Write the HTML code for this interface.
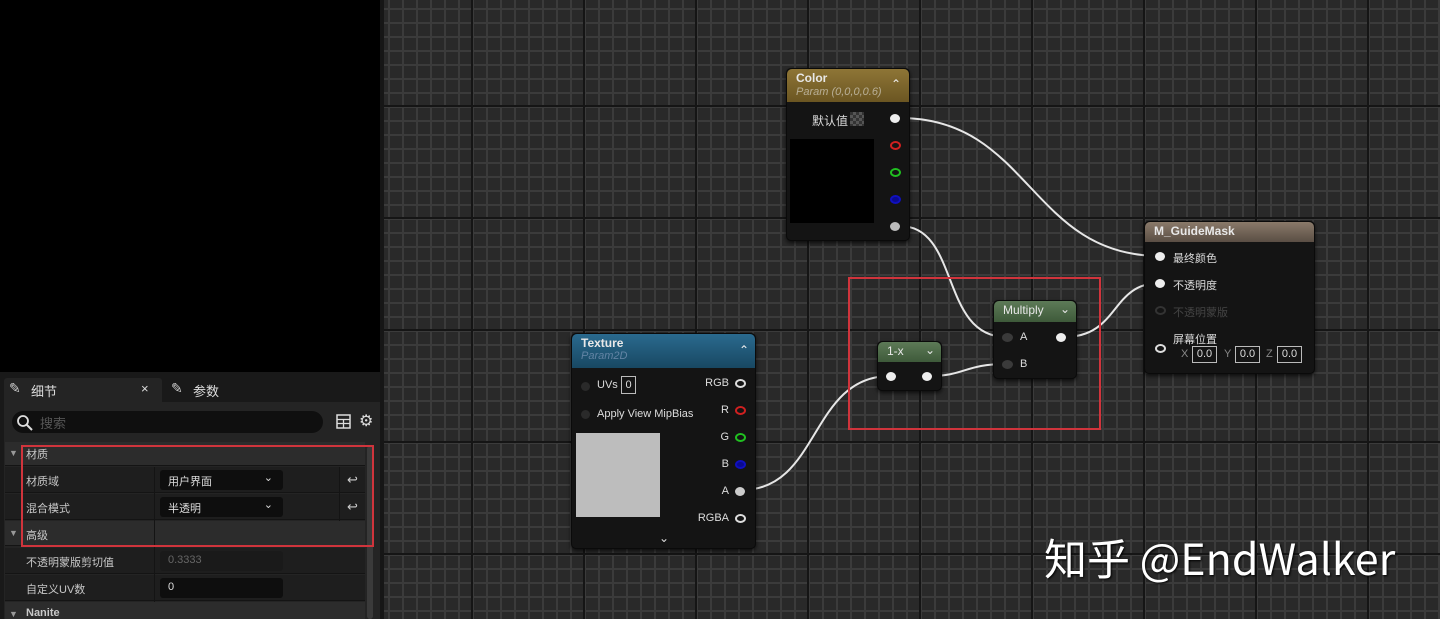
<!DOCTYPE html>
<html><head><meta charset="utf-8"><style>
*{margin:0;padding:0;box-sizing:border-box}
html,body{width:1440px;height:619px;overflow:hidden}
body{background:#000;font-family:"Liberation Sans","Noto Sans CJK SC",sans-serif;color:#ddd;position:relative}
.a{position:absolute}
#grid{left:383px;top:0;width:1057px;height:619px;background-color:#292929;
background-image:
linear-gradient(90deg,#151515 2px,transparent 2px),
linear-gradient(0deg,#151515 2px,transparent 2px),
linear-gradient(90deg,#3b3b3b 2px,transparent 2px),
linear-gradient(0deg,#3b3b3b 2px,transparent 2px);
background-size:112px 112px,112px 112px,14px 14px,14px 14px;
background-position:88px 0,0 107px,5px 0,0 10px}
.node{position:absolute;background:#141414;border-radius:5px;box-shadow:0 2px 4px rgba(0,0,0,.7);border:1px solid #0a0a0a;font-size:11px}
.hd{border-radius:5px 5px 0 0;color:#e8e8e8;font-weight:bold;font-size:12px;padding:2px 9px}
.sub{font-style:italic;font-weight:normal;font-size:11px;opacity:.55}
.pin{position:absolute;width:10px;height:9px;border-radius:50%;background:#eee}
.pino{position:absolute;width:11px;height:9px;border-radius:50%;border:2px solid #ddd}
.lbl{position:absolute;font-size:11px;color:#ddd;white-space:nowrap}
.panel{font-size:11px;color:#c8c8c8}
.row{position:absolute;left:5px;width:360px;height:26px;background:#1e1e1e;border-bottom:1px solid #141414}
.drop{position:absolute;background:#0e0e0e;border-radius:3px;height:20px;color:#ddd;padding:3px 8px;font-size:11px}
</style></head><body>
<div class="a" style="left:0;top:0;width:380px;height:372px;background:#000"></div>
<div class="a" style="left:0;top:372px;width:383px;height:247px;background:#191919"></div>
<div class="a" id="grid"></div>
<div class="a" style="left:380px;top:0;width:4px;height:619px;background:#161616"></div>

<!-- left panel -->
<div class="a panel" style="left:4px;top:378px;width:158px;height:24px;background:#242424;border-radius:3px 3px 0 0"></div>
<div class="a" style="left:9px;top:380px;font-size:14px;color:#ccc">✎</div>
<div class="a" style="left:31px;top:381px;font-size:13px;color:#ddd">细节</div>
<div class="a" style="left:141px;top:381px;font-size:13px;color:#ddd">×</div>
<div class="a" style="left:171px;top:380px;font-size:14px;color:#ccc">✎</div>
<div class="a" style="left:193px;top:381px;font-size:13px;color:#ddd">参数</div>
<div class="a" style="left:4px;top:402px;width:376px;height:217px;background:#242424"></div>
<div class="a" style="left:12px;top:411px;width:311px;height:22px;background:#0f0f0f;border-radius:11px"></div>
<svg class="a" style="left:16px;top:414px" width="18" height="18"><circle cx="7" cy="7" r="5" fill="none" stroke="#ddd" stroke-width="1.8"/><path d="M11 11l5 5" stroke="#ddd" stroke-width="2"/></svg>
<div class="a" style="left:40px;top:413px;font-size:13px;color:#555">搜索</div>
<svg class="a" style="left:336px;top:414px" width="16" height="16"><rect x="1" y="1" width="13" height="13" fill="none" stroke="#ddd" stroke-width="1.5"/><path d="M1 5.5h13M1 9.5h13M7.5 5.5v8.5" stroke="#ddd" stroke-width="1.3"/></svg>
<div class="a" style="left:359px;top:411px;font-size:16px;color:#ddd">⚙</div>

<div class="row" style="top:442px;height:24px;background:#2c2c2c"></div>
<div class="a" style="left:9px;top:448px;font-size:9px;color:#999">▼</div>
<div class="a panel" style="left:26px;top:446px">材质</div>
<div class="row" style="top:467px"></div>
<div class="a panel" style="left:26px;top:473px">材质域</div>
<div class="drop" style="left:160px;top:470px;width:123px">用户界面<span style="position:absolute;right:10px;top:1px">⌄</span></div>
<div class="a" style="left:347px;top:472px;font-size:13px;color:#ccc">↩</div>
<div class="row" style="top:494px"></div>
<div class="a panel" style="left:26px;top:500px">混合模式</div>
<div class="drop" style="left:160px;top:497px;width:123px">半透明<span style="position:absolute;right:10px;top:1px">⌄</span></div>
<div class="a" style="left:347px;top:499px;font-size:13px;color:#ccc">↩</div>
<div class="row" style="top:521px;height:25px;background:#2c2c2c"></div>
<div class="a" style="left:9px;top:528px;font-size:9px;color:#999">▼</div>
<div class="a panel" style="left:26px;top:527px">高级</div>
<div class="row" style="top:548px"></div>
<div class="a panel" style="left:26px;top:554px">不透明蒙版剪切值</div>
<div class="drop" style="left:160px;top:551px;width:123px;color:#666;background:#1a1a1a">0.3333</div>
<div class="row" style="top:575px"></div>
<div class="a panel" style="left:26px;top:581px">自定义UV数</div>
<div class="drop" style="left:160px;top:578px;width:123px">0</div>
<div class="row" style="top:602px;height:17px;background:#2c2c2c;border:none"></div>
<div class="a" style="left:9px;top:609px;font-size:9px;color:#999">▼</div>
<div class="a panel" style="left:26px;top:607px;font-weight:bold">Nanite</div>
<div class="a" style="left:154px;top:467px;width:1px;height:135px;background:#141414"></div>
<div class="a" style="left:339px;top:467px;width:1px;height:54px;background:#141414"></div>
<div class="a" style="left:367px;top:446px;width:6px;height:173px;background:#3a3a3a;border-radius:3px"></div>
<div class="a" style="left:21px;top:445px;width:353px;height:102px;border:2px solid #d0343c"></div>

<!-- wires -->
<svg class="a" style="left:0;top:0" width="1440" height="619">
<g fill="none" stroke="#e6e6e6" stroke-width="2">
<path d="M900 118 C1030 118,1030 256,1160 256"/>
<path d="M900 226 C960 226,940 337,1006 337"/>
<path d="M1064 337 C1120 337,1110 283,1160 283"/>
<path d="M930 376 C965 376,965 364,1006 364"/>
<path d="M742 490 C820 490,810 376,890 376"/>
</g>
<rect x="849" y="278" width="251" height="151" fill="none" stroke="#d0343c" stroke-width="2"/>
</svg>

<!-- Color node -->
<div class="node" style="left:786px;top:68px;width:124px;height:173px">
<div class="hd" style="height:33px;background:linear-gradient(180deg,#8e7536,#6b5622)">Color<div class="sub" style="margin-top:1px;color:#eee">Param (0,0,0,0.6)</div></div>
<div class="a" style="right:8px;top:8px;color:#eee;font-size:12px">⌃</div>
<div class="lbl" style="left:25px;top:43px;font-size:12px">默认值</div>
<div class="a" style="left:63px;top:43px;width:14px;height:14px;background:repeating-conic-gradient(#555 0 25%,#333 0 50%) 0 0/6px 6px"></div>
<div class="a" style="left:3px;top:70px;width:84px;height:84px;background:#000"></div>
<div class="pin" style="left:103px;top:45px"></div>
<div class="pino" style="left:103px;top:72px;border-color:#d02020"></div>
<div class="pino" style="left:103px;top:99px;border-color:#20c020"></div>
<div class="pino" style="left:103px;top:126px;border-color:#1010c0;background:#0a0a90"></div>
<div class="pin" style="left:103px;top:153px;background:#bbb"></div>
</div>

<!-- Texture node -->
<div class="node" style="left:571px;top:333px;width:185px;height:216px">
<div class="hd" style="height:34px;background:linear-gradient(180deg,#2a6a8e,#184862)">Texture<div class="sub" style="color:#9ac">Param2D</div></div>
<div class="a" style="right:6px;top:9px;color:#eee;font-size:12px">⌃</div>
<div class="a" style="left:9px;top:48px;width:9px;height:9px;border-radius:50%;background:#2a2a2a"></div>
<div class="lbl" style="left:25px;top:45px">UVs</div>
<div class="a" style="left:49px;top:42px;width:15px;height:18px;border:1px solid #bbb;font-size:11px;text-align:center;line-height:16px">0</div>
<div class="a" style="left:9px;top:76px;width:9px;height:9px;border-radius:50%;background:#2a2a2a"></div>
<div class="lbl" style="left:25px;top:74px">Apply View MipBias</div>
<div class="a" style="left:4px;top:99px;width:84px;height:84px;background:#bdbdbd"></div>
<div class="lbl" style="right:26px;top:43px">RGB</div><div class="pino" style="left:163px;top:45px"></div>
<div class="lbl" style="right:26px;top:70px">R</div><div class="pino" style="left:163px;top:72px;border-color:#d02020"></div>
<div class="lbl" style="right:26px;top:97px">G</div><div class="pino" style="left:163px;top:99px;border-color:#20c020"></div>
<div class="lbl" style="right:26px;top:124px">B</div><div class="pino" style="left:163px;top:126px;border-color:#1010c0;background:#0a0a90"></div>
<div class="lbl" style="right:26px;top:151px">A</div><div class="pin" style="left:163px;top:153px;background:#ccc"></div>
<div class="lbl" style="right:26px;top:178px">RGBA</div><div class="pino" style="left:163px;top:180px"></div>
<div class="a" style="left:87px;top:197px;color:#ddd;font-size:12px">⌄</div>
</div>

<!-- 1-x -->
<div class="node" style="left:877px;top:341px;width:65px;height:50px">
<div class="hd" style="height:20px;background:linear-gradient(180deg,#5d7a57,#3e5a3a);font-weight:normal">1-x<span style="position:absolute;right:6px;top:1px">⌄</span></div>
<div class="pin" style="left:8px;top:30px"></div>
<div class="pin" style="left:44px;top:30px"></div>
</div>

<!-- Multiply -->
<div class="node" style="left:993px;top:300px;width:84px;height:79px">
<div class="hd" style="height:21px;background:linear-gradient(180deg,#5d7a57,#3e5a3a);font-weight:normal">Multiply<span style="position:absolute;right:6px;top:1px">⌄</span></div>
<div class="a" style="left:8px;top:32px;width:11px;height:9px;border-radius:50%;background:#3a3a3a"></div>
<div class="lbl" style="left:26px;top:30px">A</div>
<div class="a" style="left:8px;top:59px;width:11px;height:9px;border-radius:50%;background:#3a3a3a"></div>
<div class="lbl" style="left:26px;top:57px">B</div>
<div class="pin" style="left:62px;top:32px"></div>
</div>

<!-- M_GuideMask -->
<div class="node" style="left:1144px;top:221px;width:171px;height:153px">
<div class="hd" style="height:20px;background:linear-gradient(180deg,#8a7a6a,#5a4e44)">M_GuideMask</div>
<div class="pin" style="left:10px;top:30px"></div><div class="lbl" style="left:28px;top:28px">最终颜色</div>
<div class="pin" style="left:10px;top:57px"></div><div class="lbl" style="left:28px;top:55px">不透明度</div>
<div class="pino" style="left:10px;top:84px;border-color:#333"></div><div class="lbl" style="left:28px;top:82px;color:#444">不透明蒙版</div>
<div class="lbl" style="left:28px;top:109px">屏幕位置</div>
<div class="pino" style="left:10px;top:122px"></div>
<div class="lbl" style="left:36px;top:126px;color:#888">X</div><div class="a" style="left:47px;top:124px;width:25px;height:17px;border:1px solid #bbb;font-size:11px;text-align:center;line-height:15px">0.0</div>
<div class="lbl" style="left:79px;top:126px;color:#888">Y</div><div class="a" style="left:90px;top:124px;width:25px;height:17px;border:1px solid #bbb;font-size:11px;text-align:center;line-height:15px">0.0</div>
<div class="lbl" style="left:121px;top:126px;color:#888">Z</div><div class="a" style="left:132px;top:124px;width:25px;height:17px;border:1px solid #bbb;font-size:11px;text-align:center;line-height:15px">0.0</div>
</div>

<div class="a" style="left:1044px;top:527px;font-size:43px;line-height:60px;color:#fff;white-space:nowrap;font-family:'Noto Sans CJK SC',sans-serif;text-shadow:1px 1px 2px #000">知乎 @EndWalker</div>
</body></html>
